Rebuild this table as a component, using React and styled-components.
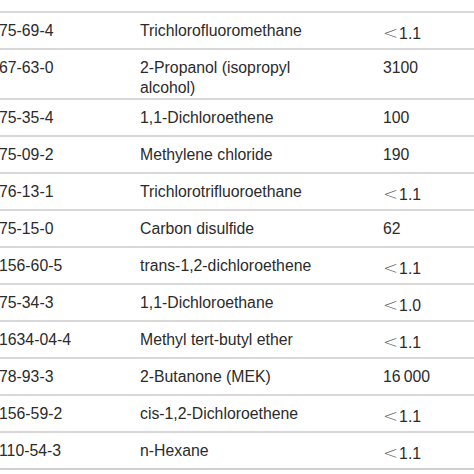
import React from "react";
import styled, { createGlobalStyle } from "styled-components";

const GlobalStyle = createGlobalStyle`
  body {
    margin: 0;
    background: #ffffff;
    font-family: "Liberation Sans", Arial, sans-serif;
  }
`;

const rows = [
  { cas: "75-69-4", name: "Trichlorofluoromethane", value: "1.1", lt: true },
  { cas: "67-63-0", name: "2-Propanol (isopropyl alcohol)", value: "3100" },
  { cas: "75-35-4", name: "1,1-Dichloroethene", value: "100" },
  { cas: "75-09-2", name: "Methylene chloride", value: "190" },
  { cas: "76-13-1", name: "Trichlorotrifluoroethane", value: "1.1", lt: true },
  { cas: "75-15-0", name: "Carbon disulfide", value: "62" },
  { cas: "156-60-5", name: "trans-1,2-dichloroethene", value: "1.1", lt: true },
  { cas: "75-34-3", name: "1,1-Dichloroethane", value: "1.0", lt: true },
  { cas: "1634-04-4", name: "Methyl tert-butyl ether", value: "1.1", lt: true },
  { cas: "78-93-3", name: "2-Butanone (MEK)", value: "16\u2009000" },
  { cas: "156-59-2", name: "cis-1,2-Dichloroethene", value: "1.1", lt: true },
  { cas: "110-54-3", name: "n-Hexane", value: "1.1", lt: true },
];

const Table = styled.div`
  padding-top: 11px;
  width: 474px;
  height: 474px;
  overflow: hidden;
  color: #2b2b2b;
  font-size: 15.8px;
  line-height: 20px;
`;

const Row = styled.div`
  display: grid;
  grid-template-columns: 140px 243px 1fr;
  align-items: start;
  min-height: 35px;
  border-top: 2px solid #d8d8d8;
  &:last-child {
    border-bottom: 2px solid #cfcfcf;
  }
`;

const Cell = styled.div`
  padding-top: ${(p) => (p.$low ? "11px" : "8px")};
  margin-left: ${(p) => (p.$shift ? "-1px" : "0")};
  padding-right: ${(p) => (p.$wide ? "50px" : "12px")};
`;

const Less = styled.span`
  font-family: "DejaVu Sans", sans-serif;
  font-weight: 200;
  font-size: 18px;
  line-height: 0;
  color: #666;
  margin-right: 1px;
`;

export default function App() {
  return (
    <>
      <GlobalStyle />
      <Table>
        {rows.map((r) => (
          <Row key={r.cas}>
            <Cell $shift>{r.cas}</Cell>
            <Cell $wide>{r.name}</Cell>
            <Cell $low={r.lt}>
              {r.lt && <Less>&lt;</Less>}
              {r.value}
            </Cell>
          </Row>
        ))}
      </Table>
    </>
  );
}
